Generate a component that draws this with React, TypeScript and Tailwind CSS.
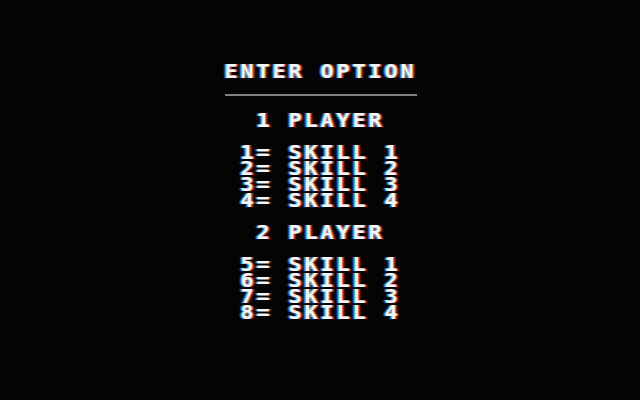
const rows1 = ["1= SKILL 1", "2= SKILL 2", "3= SKILL 3", "4= SKILL 4"];
const rows2 = ["5= SKILL 1", "6= SKILL 2", "7= SKILL 3", "8= SKILL 4"];

// one text row on the 16px character grid
function Row({ text, indent = 0 }: { text: string; indent?: number }) {
  return (
    <div className="flex h-4 leading-4" style={{ paddingLeft: indent * 16 }}>
      {text.split("").map((c, i) => (
        <span
          key={i}
          className="inline-block w-4 scale-x-[1.15] text-center text-[19px] font-bold text-[#f6f6f6] [text-shadow:-1px_0_#1ab4ff,1px_0_#ff4a14,-2px_0_rgba(26,140,255,0.45),2px_0_rgba(255,74,20,0.45)]"
        >
          {c === " " ? "\u00a0" : c}
        </span>
      ))}
    </div>
  );
}

export default function App() {
  return (
    <div className="w-[640px] h-[400px] overflow-hidden bg-[#040404] font-['DejaVu_Sans_Mono',monospace]">
      <div className="ml-[223px] pt-[63px] flex flex-col">
        <Row text="ENTER OPTION" />
        <div className="mt-[15px] ml-[2px] h-[2px] w-[192px] bg-[#808080]" />

        <div className="mt-4">
          <Row text="1 PLAYER" indent={2} />
        </div>
        <div className="mt-4">
          {rows1.map((r) => (
            <Row key={r} text={r} indent={1} />
          ))}
        </div>

        <div className="mt-4">
          <Row text="2 PLAYER" indent={2} />
        </div>
        <div className="mt-4">
          {rows2.map((r) => (
            <Row key={r} text={r} indent={1} />
          ))}
        </div>
      </div>
    </div>
  );
}
